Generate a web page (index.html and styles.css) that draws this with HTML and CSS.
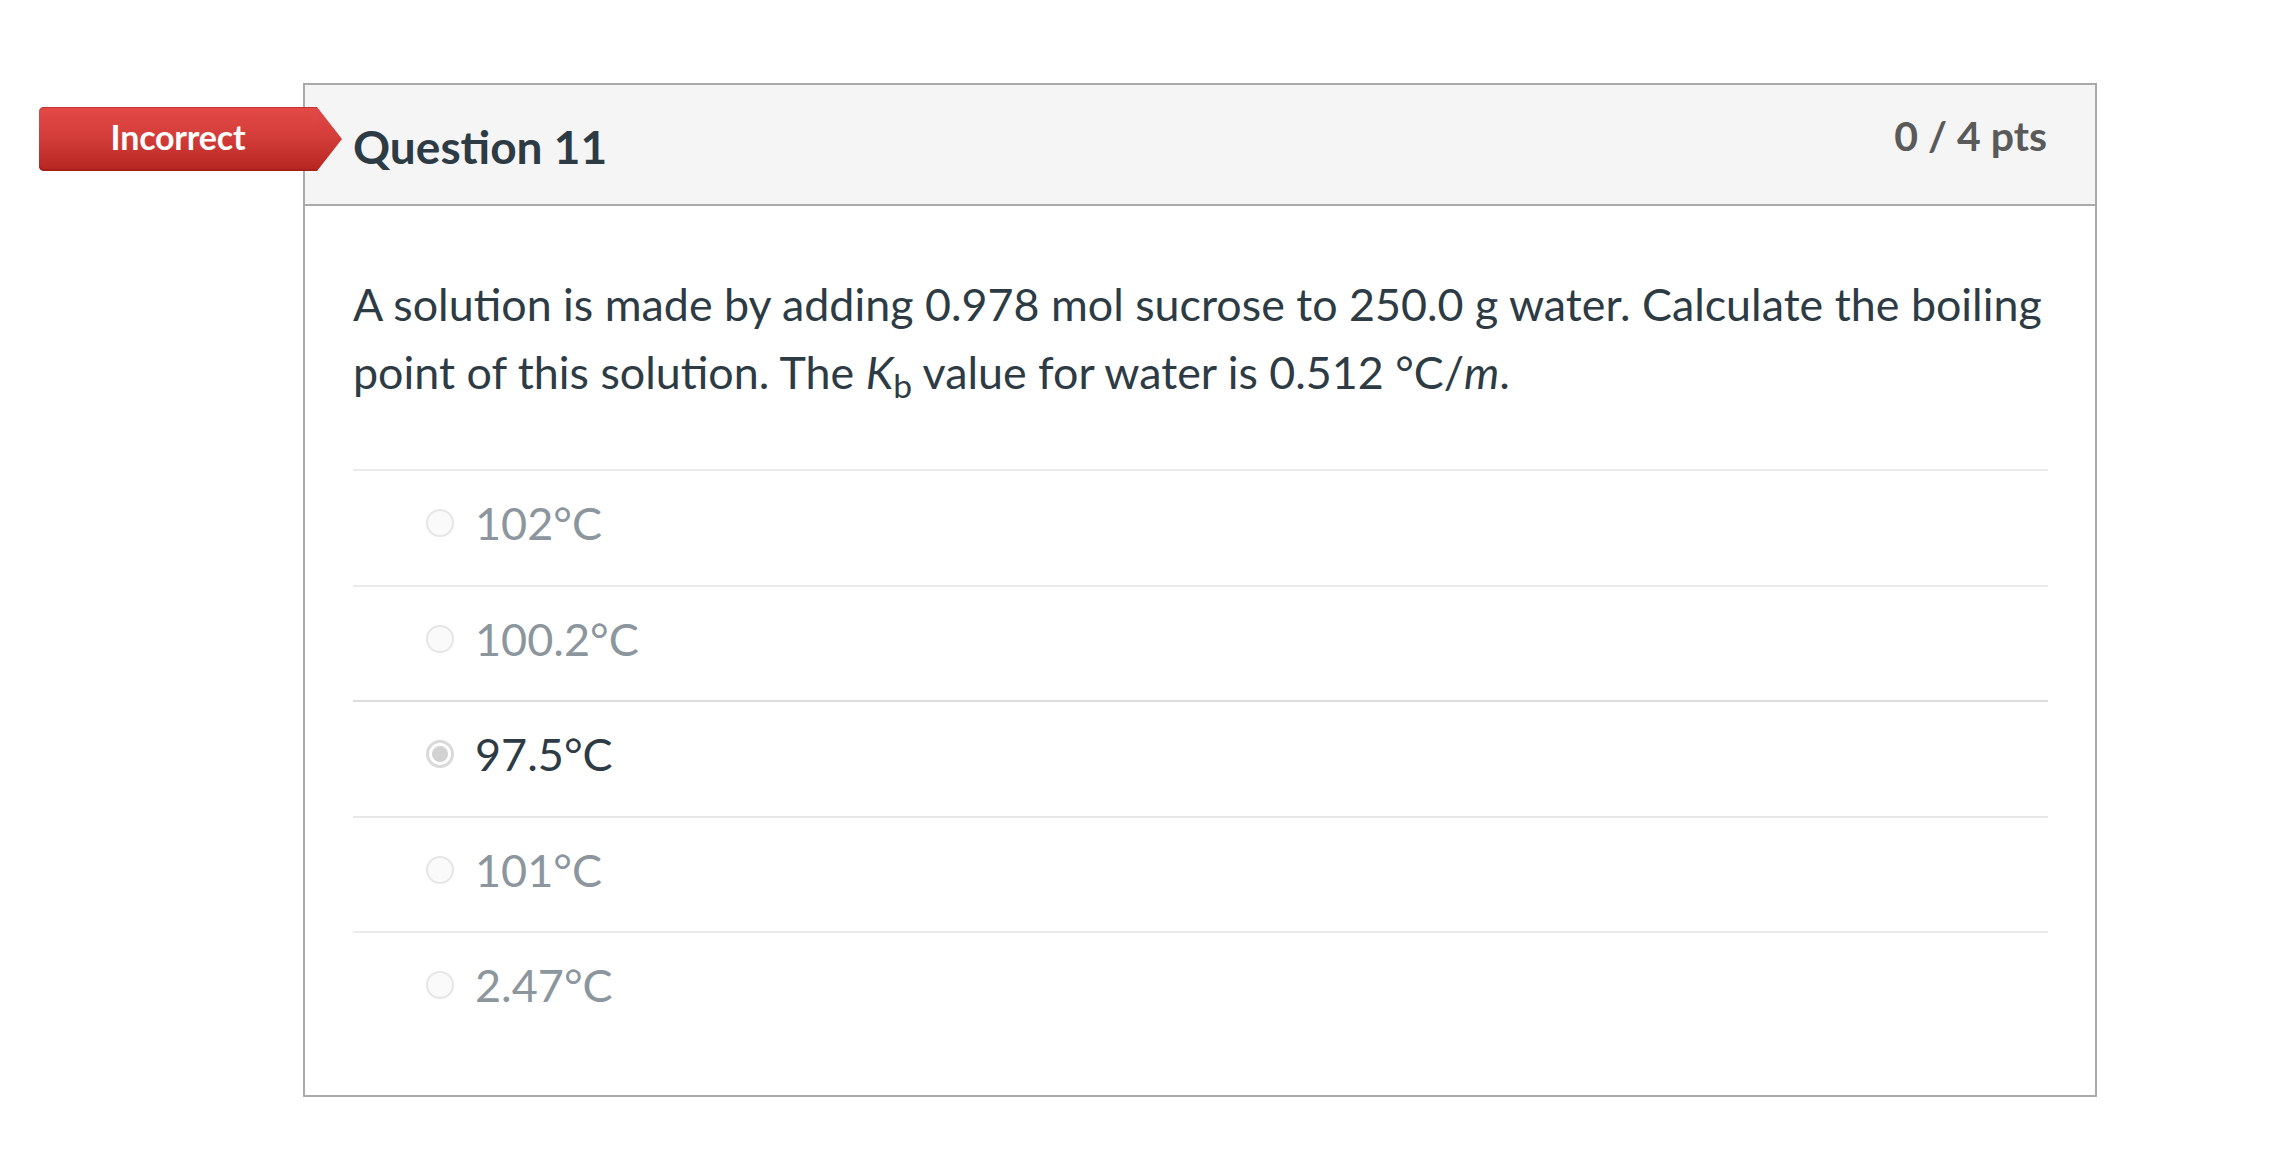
FILE: index.html
```html
<!DOCTYPE html>
<html lang="en">
<head>
<meta charset="utf-8">
<title>Question 11</title>
<link rel="stylesheet" href="styles.css">
</head>
<body>
<div class="page">
  <div class="card">
    <div class="badge">Incorrect</div>
    <div class="card-header">
      <h2 class="title">Question 11</h2>
      <div class="pts">0 / 4 pts</div>
    </div>
    <div class="card-body">
      <p class="qtext">A solution is made by adding 0.978 mol sucrose to 250.0 g water. Calculate the boiling point of this solution. The <i>K</i><sub>b</sub> value for water is 0.512 °C/<i>m</i>.</p>
      <div class="answers">
        <div class="answer"><span class="radio"></span><span class="label">102°C</span></div>
        <div class="answer"><span class="radio"></span><span class="label">100.2°C</span></div>
        <div class="answer selected"><span class="radio"></span><span class="label">97.5°C</span></div>
        <div class="answer"><span class="radio"></span><span class="label">101°C</span></div>
        <div class="answer"><span class="radio"></span><span class="label">2.47°C</span></div>
      </div>
    </div>
  </div>
</div>
</body>
</html>
```
FILE: styles.css
```css
* { box-sizing: border-box; }
html, body { margin: 0; padding: 0; background: #ffffff; }
body { font-family: Lato, "Open Sans", "Liberation Sans", sans-serif; color: #2d3b45; }

.page { padding-top: 83px; padding-left: 303px; }

.card {
  position: relative;
  width: 1794px;
  border: 2px solid #aaaaaa;
  background: #ffffff;
}

.badge {
  position: absolute;
  left: -266px;
  top: 22px;
  width: 278px;
  height: 64px;
  border-radius: 5px 0 0 5px;
  background: linear-gradient(#e34a47, #d23c38 50%, #b5251f);
  box-shadow: inset 0 1px 0 #c3332f, inset 0 -2px 0 #a52019;
  color: #ffffff;
  font-weight: 700;
  font-size: 34px;
  line-height: 60px;
  text-align: center;
  letter-spacing: -0.2px;
}
.badge::after {
  content: "";
  position: absolute;
  left: 100%;
  top: 0;
  width: 25px;
  height: 64px;
  background: linear-gradient(#e3474a, #d23c38 50%, #b5251f);
  clip-path: polygon(0 0, 100% 50%, 0 100%);
}

.card-header {
  display: flex;
  justify-content: space-between;
  align-items: flex-start;
  height: 121px;
  padding: 0 48px;
  background: #f5f5f5;
  border-bottom: 2px solid #aaaaaa;
}
.title {
  margin: 0;
  padding-top: 36px;
  font-size: 46px;
  line-height: 52px;
  font-weight: 700;
  color: #2d3b45;
}
.pts {
  padding-top: 25px;
  font-size: 41px;
  line-height: 52px;
  font-weight: 700;
  color: #5a5a5a;
}

.card-body { padding: 65px 47px 48px 48px; }

.qtext {
  margin: 0 0 63px;
  font-size: 44.8px;
  line-height: 67.5px;
  color: #2d3b45;
}
.qtext sub { font-size: 0.75em; line-height: 1; vertical-align: -0.28em; }

.answer {
  display: flex;
  align-items: center;
  height: 115.5px;
  padding-left: 73px;
  padding-bottom: 9px;
  border-top: 2px solid #ebebeb;
}
.answer.selected { border-top-color: #dcdcdc; }
.answer.selected + .answer { border-top-color: #e8e8e8; }

.radio {
  flex: none;
  width: 28px;
  height: 28px;
  border-radius: 50%;
  border: 2px solid #e6e6e6;
  background: #fafafa;
  margin-right: 21px;
}
.selected .radio {
  border: 3px solid #dadada;
  background: radial-gradient(circle, #d2d2d2 0 7.5px, #ffffff 8.5px);
}

.label {
  font-size: 45px;
  line-height: 54px;
  color: #8b969e;
}
.selected .label { color: #2d3b45; }
```
